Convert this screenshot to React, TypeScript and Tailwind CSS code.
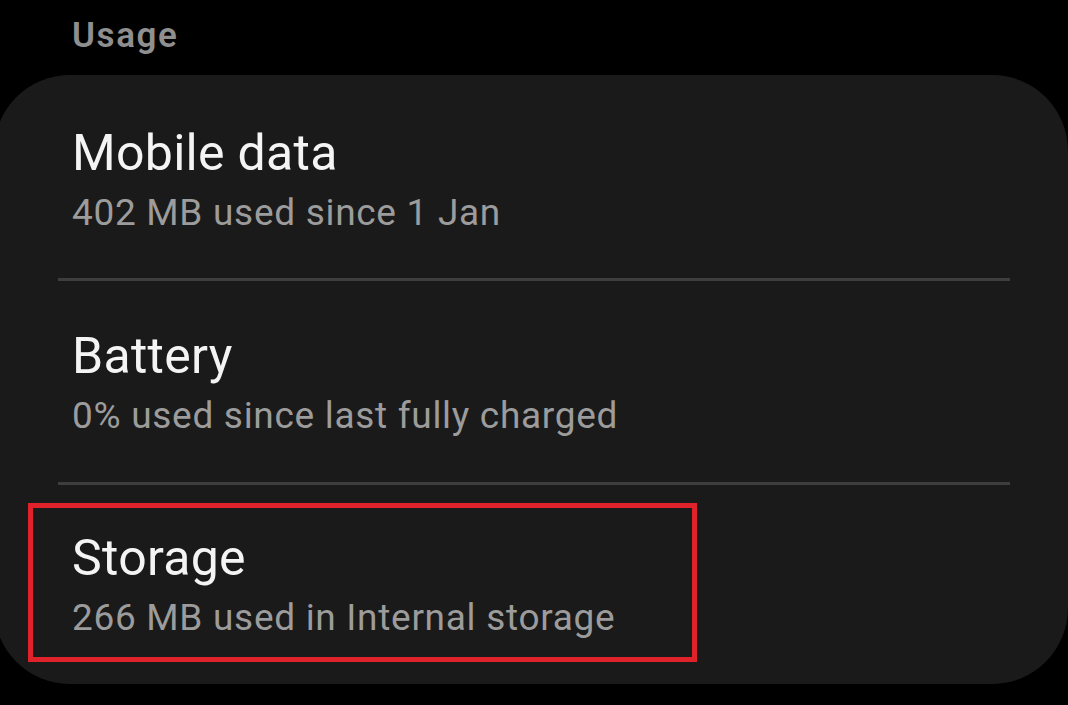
const rows = [
  { title: 'Mobile data', sub: '402 MB used since 1 Jan' },
  { title: 'Battery', sub: '0% used since last fully charged' },
  { title: 'Storage', sub: '266 MB used in Internal storage' },
]

const rowPad = ['pt-[49px] pb-[43px]', 'pt-[46px] pb-[44px]', 'pt-[44px] pb-[44px]']

function UsageRow({ title, sub, pad }: { title: string; sub: string; pad: string }) {
  return (
    <div className={`pl-[78px] ${pad}`}>
      <p className="text-[50px] leading-[58px] tracking-[0.3px] text-[#f4f4f4]">{title}</p>
      <p className="mt-[9px] text-[37px] leading-[44px] tracking-[0.7px] text-[#9c9c9c]">{sub}</p>
    </div>
  )
}

export default function App() {
  return (
    <div
      className="relative w-[1068px] h-[705px] overflow-hidden bg-black"
      style={{ fontFamily: 'Roboto, "Noto Sans", sans-serif' }}
    >
      <div className="pl-[72px] pt-[14px] h-[75px]">
        <p className="text-[35px] leading-[44px] font-semibold tracking-[1.6px] text-[#8f8f8f]">Usage</p>
      </div>

      <div className="-ml-[6px] w-[1074px] rounded-[76px] bg-[#1a1a1a]">
        {rows.map((r, i) => (
          <div key={r.title}>
            {i > 0 && <div className="ml-[64px] mr-[58px] h-[3px] bg-[#3e3e3e]" />}
            <UsageRow title={r.title} sub={r.sub} pad={rowPad[i]} />
          </div>
        ))}
      </div>

      {/* annotation box */}
      <div className="absolute left-[28px] top-[503px] w-[669px] h-[159px] border-[5px] border-[#e0232b]" />
    </div>
  )
}
